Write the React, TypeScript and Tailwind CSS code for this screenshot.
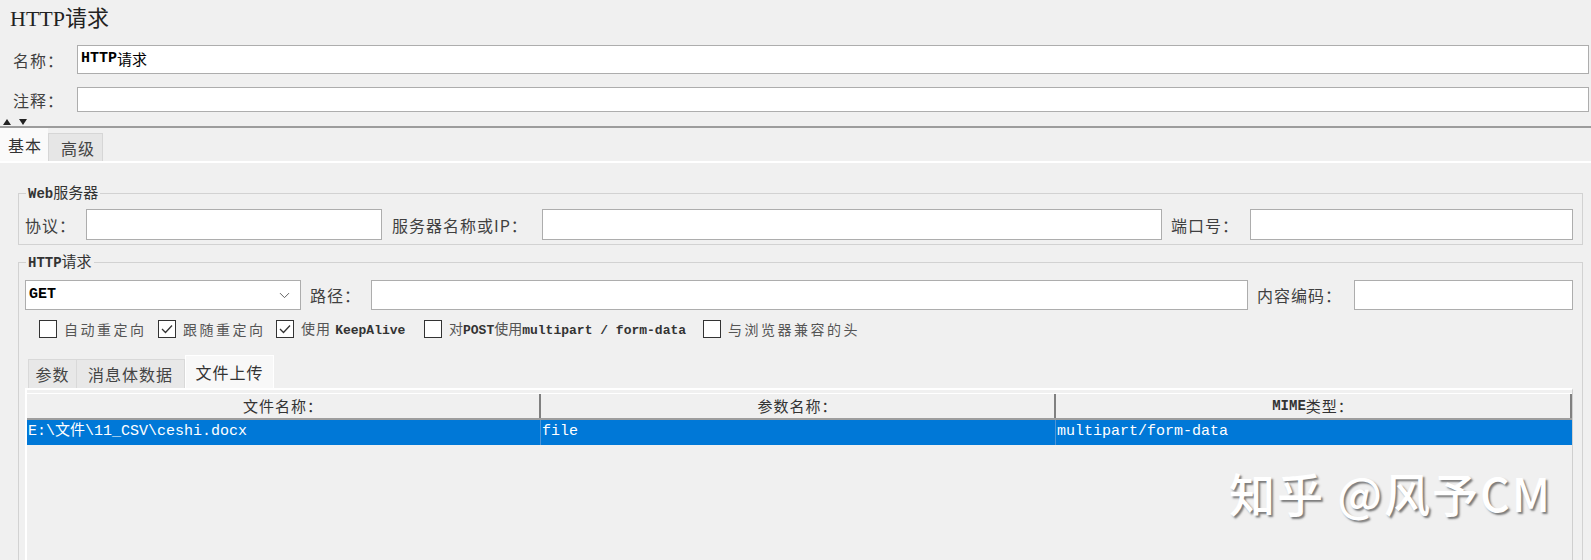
import { ChevronDown } from "lucide-react";
import type { ReactNode } from "react";

const mono = "font-['Liberation_Mono','Noto_Sans_CJK_SC',monospace]";

function Field({ className = "", children }: { className?: string; children?: ReactNode }) {
  return (
    <div className={`h-full bg-white border border-[#adadad] flex items-center px-[3px] text-black ${className}`}>
      {children}
    </div>
  );
}

function Label({ className = "", children }: { className?: string; children: ReactNode }) {
  return <div className={`shrink-0 text-[16px] tracking-[1px] text-[#404040] whitespace-nowrap ${className}`}>{children}</div>;
}

function Check({ checked = false, width, children }: { checked?: boolean; width: string; children: ReactNode }) {
  return (
    <div className="flex items-center shrink-0">
      <span className="w-[18px] h-[18px] border border-[#333] bg-white flex items-center justify-center shrink-0">
        {checked && (
          <svg width="14" height="14" viewBox="0 0 14 14">
            <path d="M2 7 L5.5 10.5 L12 3.5" fill="none" stroke="#333" strokeWidth="1.3" />
          </svg>
        )}
      </span>
      <span className={`block ml-[7px] text-[14px] text-[#555] whitespace-nowrap ${width}`}>{children}</span>
    </div>
  );
}

export default function App() {
  return (
    <div className="relative w-[1591px] h-[560px] overflow-hidden bg-[#f0f0f0] text-[#333] font-['Noto_Sans_CJK_SC',sans-serif]">
      {/* header */}
      <div className="h-[33px] pl-[10px] pt-[5px] text-[22px] leading-[28px] font-['Liberation_Serif','Noto_Sans_CJK_SC',serif] text-[#222]">
        HTTP请求
      </div>
      <div className="mt-[12px] flex items-center h-[29px]">
        <Label className="w-[77px] pl-[13px]">名称：</Label>
        <Field className="flex-1 mr-[2px] text-[15px]">
          <span className={`${mono} font-bold`}>HTTP</span>
          <span>请求</span>
        </Field>
      </div>
      <div className="mt-[13px] flex items-center h-[25px]">
        <Label className="w-[77px] pl-[13px]">注释：</Label>
        <Field className="flex-1 mr-[2px]" />
      </div>
      <div className="h-[14px] flex items-end gap-[8px] pl-[3px] pb-[1px]">
        <svg width="8" height="6" viewBox="0 0 8 6">
          <polygon points="4,0 8,6 0,6" fill="#222" />
        </svg>
        <svg width="8" height="6" viewBox="0 0 8 6">
          <polygon points="0,0 8,0 4,6" fill="#222" />
        </svg>
      </div>
      <div className="h-[2px] bg-[#9c9c9c]" />

      {/* main tabs */}
      <div className="flex items-end h-[33px]">
        <div className="h-full w-[48px] bg-[#fafafa] flex items-center pl-[8px] text-[16px] tracking-[1px] text-[#333]">基本</div>
        <div className="h-[28px] w-[55px] bg-[#e6e6e6] border border-b-0 border-[#d6d6d6] flex items-center pl-[12px] text-[16px] tracking-[1px] text-[#444]">
          高级
        </div>
      </div>
      <div className="h-[2px] bg-white" />

      {/* content */}
      <div className="pl-[18px] pr-[8px] pt-[20px]">
        <fieldset className="border border-[#d2d2d2] px-[6px] pr-[9px] pt-[6px] pb-[4px]">
          <legend className="ml-[1px] px-[2px] text-[15px] leading-[18px] text-[#333]">
            <span className={`${mono} font-bold text-[14px]`}>Web</span>服务器
          </legend>
          <div className="flex items-center h-[31px]">
            <Label className="w-[61px]">协议：</Label>
            <Field className="w-[296px] shrink-0" />
            <Label className="ml-[10px] w-[150px]">服务器名称或IP：</Label>
            <Field className="flex-1" />
            <Label className="ml-[9px] w-[79px]">端口号：</Label>
            <Field className="w-[323px] shrink-0" />
          </div>
        </fieldset>

        <fieldset className="mt-[7px] border border-[#d2d2d2] border-b-0 px-[6px] pr-[9px] pt-[8px] h-[330px]">
          <legend className="ml-[1px] px-[2px] text-[15px] leading-[18px] text-[#333]">
            <span className={`${mono} font-bold text-[14px]`}>HTTP</span>请求
          </legend>
          <div className="flex items-center h-[30px]">
            <Field className="w-[276px] shrink-0 justify-between">
              <span className={`${mono} font-bold text-[15px]`}>GET</span>
              <ChevronDown size={17} strokeWidth={1.3} className="text-[#555] mr-[4px]" />
            </Field>
            <Label className="ml-[9px] w-[61px]">路径：</Label>
            <Field className="flex-1" />
            <Label className="ml-[9px] w-[97px]">内容编码：</Label>
            <Field className="w-[219px] shrink-0" />
          </div>

          <div className="mt-[10px] flex items-center pl-[14px] h-[18px]">
            <Check width="w-[94px] tracking-[2.5px]">自动重定向</Check>
            <Check checked width="w-[93px] tracking-[2.5px]">跟随重定向</Check>
            <Check checked width="w-[123px]">
              <span className="tracking-[1px]">使用 </span>
              <span className={`${mono} font-bold text-[13px] text-[#333]`}>KeepAlive</span>
            </Check>
            <Check width="w-[254px]">
              对<span className={`${mono} font-bold text-[13px] text-[#333]`}>POST</span>使用
              <span className={`${mono} font-bold text-[13px] text-[#333]`}>multipart / form-data</span>
            </Check>
            <Check width="w-[140px] tracking-[2.5px]">与浏览器兼容的头</Check>
          </div>

          {/* inner tabs */}
          <div className="mt-[17px] flex items-end h-[33px] pl-[3px]">
            <div className="h-[29px] w-[49px] bg-[#e8e8e8] border border-b-0 border-[#d9d9d9] flex items-center justify-center text-[16px] tracking-[1px] text-[#444]">
              参数
            </div>
            <div className="h-[29px] w-[108px] bg-[#e8e8e8] border border-b-0 border-l-0 border-[#d9d9d9] flex items-center justify-center text-[16px] tracking-[1px] text-[#444]">
              消息体数据
            </div>
            <div className="h-full w-[89px] bg-[#f8f8f8] border border-b-0 border-white flex items-center justify-center text-[16px] tracking-[1px] text-[#333]">
              文件上传
            </div>
          </div>
          <div className="h-[200px] border-t-2 border-l-2 border-white border-r border-r-[#cfcfcf] pt-[3px]">
            <div className="grid grid-cols-[514px_515px_1fr] h-[27px] bg-[#f0f0f0] border-t border-white border-b-2 border-b-[#9d9d9d] text-[15px] tracking-[1px] text-[#333]">
              <div className="flex items-center justify-center border-r-2 border-[#808080]">文件名称：</div>
              <div className="flex items-center justify-center border-r-2 border-[#808080]">参数名称：</div>
              <div className="flex items-center justify-center border-r-2 border-[#808080]">
                <span className={`${mono} font-bold text-[14px] tracking-normal`}>MIME</span>类型：
              </div>
            </div>
            <div className={`grid grid-cols-[514px_515px_1fr] h-[25px] bg-[#0078d7] text-white text-[15px] ${mono}`}>
              <div className="flex items-center pl-[1px] border-r border-[#4f95d6] whitespace-nowrap">E:\文件\11_CSV\ceshi.docx</div>
              <div className="flex items-center pl-[1px] border-r border-[#4f95d6]">file</div>
              <div className="flex items-center pl-[1px]">multipart/form-data</div>
            </div>
          </div>
        </fieldset>
      </div>

      {/* watermark */}
      <div className="absolute left-[1229px] top-[469px] text-[46px] leading-[46px] tracking-[2px] text-white font-medium whitespace-nowrap [text-shadow:2px_2px_2px_rgba(60,60,60,0.65)]">
        知乎 @风予CM
      </div>
    </div>
  );
}
